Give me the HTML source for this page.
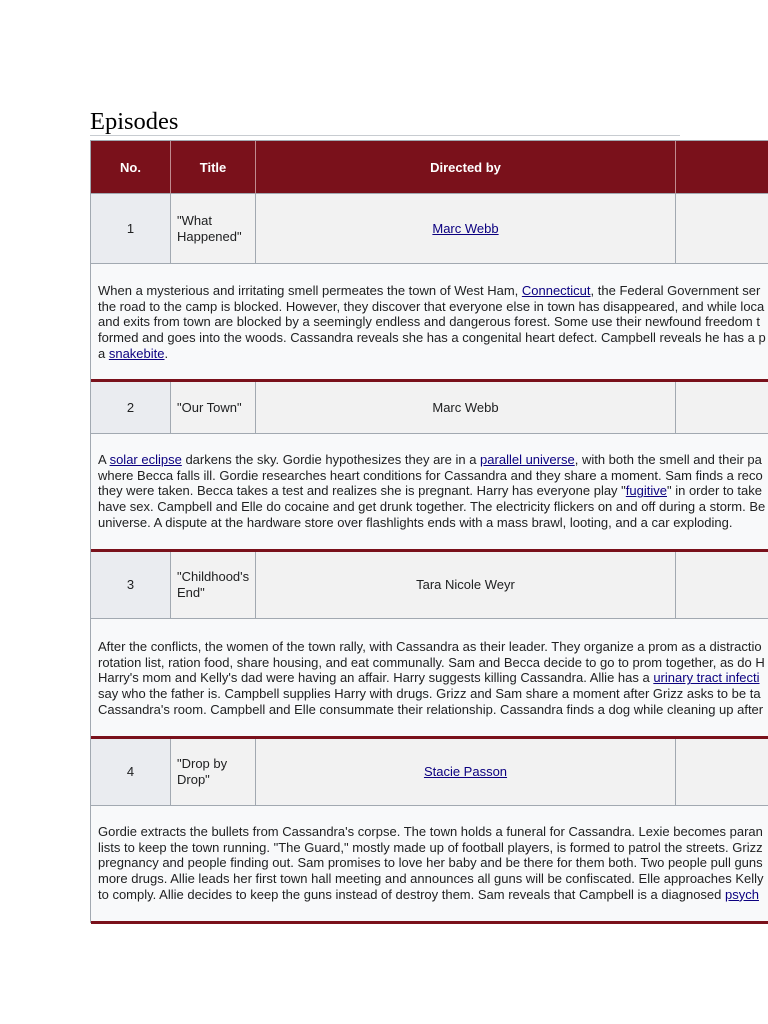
<!DOCTYPE html>
<html><head><meta charset="utf-8">
<style>
html,body{margin:0;padding:0;width:768px;height:1024px;overflow:hidden;background:#fff;font-family:"Liberation Sans",Arial,sans-serif;color:#202122}
.a{position:absolute;box-sizing:border-box}
h2{position:absolute;left:90px;top:107px;margin:0;font-family:"Liberation Serif",serif;font-weight:normal;font-size:24.5px;color:#000;line-height:30px}
.hr{left:90px;top:135px;width:590px;height:1px;background:#c8ccd1}
.hd{background:#7a111b;color:#fff;font-weight:bold;font-size:13px;display:flex;align-items:center;justify-content:center;border-right:1px solid #c08a8f;border-bottom:1px solid #a2a9b1}
.c{background:#f2f2f2;font-size:13px;display:flex;align-items:center;border-right:1px solid #a2a9b1;border-bottom:1px solid #a2a9b1;line-height:16px}
.n{background:#eaecf0;justify-content:center}
.t{padding-left:6px}
.d{justify-content:center}
.desc{background:#f8f9fa;font-size:13px;line-height:15.7px;white-space:nowrap;overflow:hidden;padding-left:7px;border-bottom:3px solid #7a111b}
a{color:#0b0080;text-decoration:underline}
</style></head><body>
<h2>Episodes</h2>
<div class="a hr"></div>
<div class="a" style="left:90px;top:140px;width:678px;height:783px;border-left:1px solid #a2a9b1;border-top:1px solid #a2a9b1"></div>

<div class="a hd" style="left:91px;top:141px;width:80px;height:53px">No.</div>
<div class="a hd" style="left:171px;top:141px;width:85px;height:53px">Title</div>
<div class="a hd" style="left:256px;top:141px;width:420px;height:53px">Directed by</div>
<div class="a hd" style="left:676px;top:141px;width:100px;height:53px"></div>

<div class="a c n" style="left:91px;top:194px;width:80px;height:70px">1</div>
<div class="a c t" style="left:171px;top:194px;width:85px;height:70px">"What<br>Happened"</div>
<div class="a c d" style="left:256px;top:194px;width:420px;height:70px"><a>Marc Webb</a></div>
<div class="a c" style="left:676px;top:194px;width:100px;height:70px"></div>
<div class="a desc" style="left:91px;top:264px;width:677px;height:118px;padding-top:19px">When a mysterious and irritating smell permeates the town of West Ham, <a>Connecticut</a>, the Federal Government ser<br>the road to the camp is blocked. However, they discover that everyone else in town has disappeared, and while loca<br>and exits from town are blocked by a seemingly endless and dangerous forest. Some use their newfound freedom t<br>formed and goes into the woods. Cassandra reveals she has a congenital heart defect. Campbell reveals he has a p<br>a <a>snakebite</a>.</div>

<div class="a c n" style="left:91px;top:382px;width:80px;height:52px">2</div>
<div class="a c t" style="left:171px;top:382px;width:85px;height:52px">"Our Town"</div>
<div class="a c d" style="left:256px;top:382px;width:420px;height:52px">Marc Webb</div>
<div class="a c" style="left:676px;top:382px;width:100px;height:52px"></div>
<div class="a desc" style="left:91px;top:434px;width:677px;height:118px;padding-top:18px">A <a>solar eclipse</a> darkens the sky. Gordie hypothesizes they are in a <a>parallel universe</a>, with both the smell and their pa<br>where Becca falls ill. Gordie researches heart conditions for Cassandra and they share a moment. Sam finds a reco<br>they were taken. Becca takes a test and realizes she is pregnant. Harry has everyone play "<a>fugitive</a>" in order to take<br>have sex. Campbell and Elle do cocaine and get drunk together. The electricity flickers on and off during a storm. Be<br>universe. A dispute at the hardware store over flashlights ends with a mass brawl, looting, and a car exploding.</div>

<div class="a c n" style="left:91px;top:552px;width:80px;height:67px">3</div>
<div class="a c t" style="left:171px;top:552px;width:85px;height:67px">"Childhood's<br>End"</div>
<div class="a c d" style="left:256px;top:552px;width:420px;height:67px">Tara Nicole Weyr</div>
<div class="a c" style="left:676px;top:552px;width:100px;height:67px"></div>
<div class="a desc" style="left:91px;top:619px;width:677px;height:120px;padding-top:20px">After the conflicts, the women of the town rally, with Cassandra as their leader. They organize a prom as a distractio<br>rotation list, ration food, share housing, and eat communally. Sam and Becca decide to go to prom together, as do H<br>Harry's mom and Kelly's dad were having an affair. Harry suggests killing Cassandra. Allie has a <a>urinary tract infecti</a><br>say who the father is. Campbell supplies Harry with drugs. Grizz and Sam share a moment after Grizz asks to be ta<br>Cassandra's room. Campbell and Elle consummate their relationship. Cassandra finds a dog while cleaning up after</div>

<div class="a c n" style="left:91px;top:739px;width:80px;height:67px">4</div>
<div class="a c t" style="left:171px;top:739px;width:85px;height:67px">"Drop by<br>Drop"</div>
<div class="a c d" style="left:256px;top:739px;width:420px;height:67px"><a>Stacie Passon</a></div>
<div class="a c" style="left:676px;top:739px;width:100px;height:67px"></div>
<div class="a desc" style="left:91px;top:806px;width:677px;height:118px;padding-top:18px">Gordie extracts the bullets from Cassandra's corpse. The town holds a funeral for Cassandra. Lexie becomes paran<br>lists to keep the town running. "The Guard," mostly made up of football players, is formed to patrol the streets. Grizz<br>pregnancy and people finding out. Sam promises to love her baby and be there for them both. Two people pull guns<br>more drugs. Allie leads her first town hall meeting and announces all guns will be confiscated. Elle approaches Kelly<br>to comply. Allie decides to keep the guns instead of destroy them. Sam reveals that Campbell is a diagnosed <a>psych</a></div>
</body></html>
